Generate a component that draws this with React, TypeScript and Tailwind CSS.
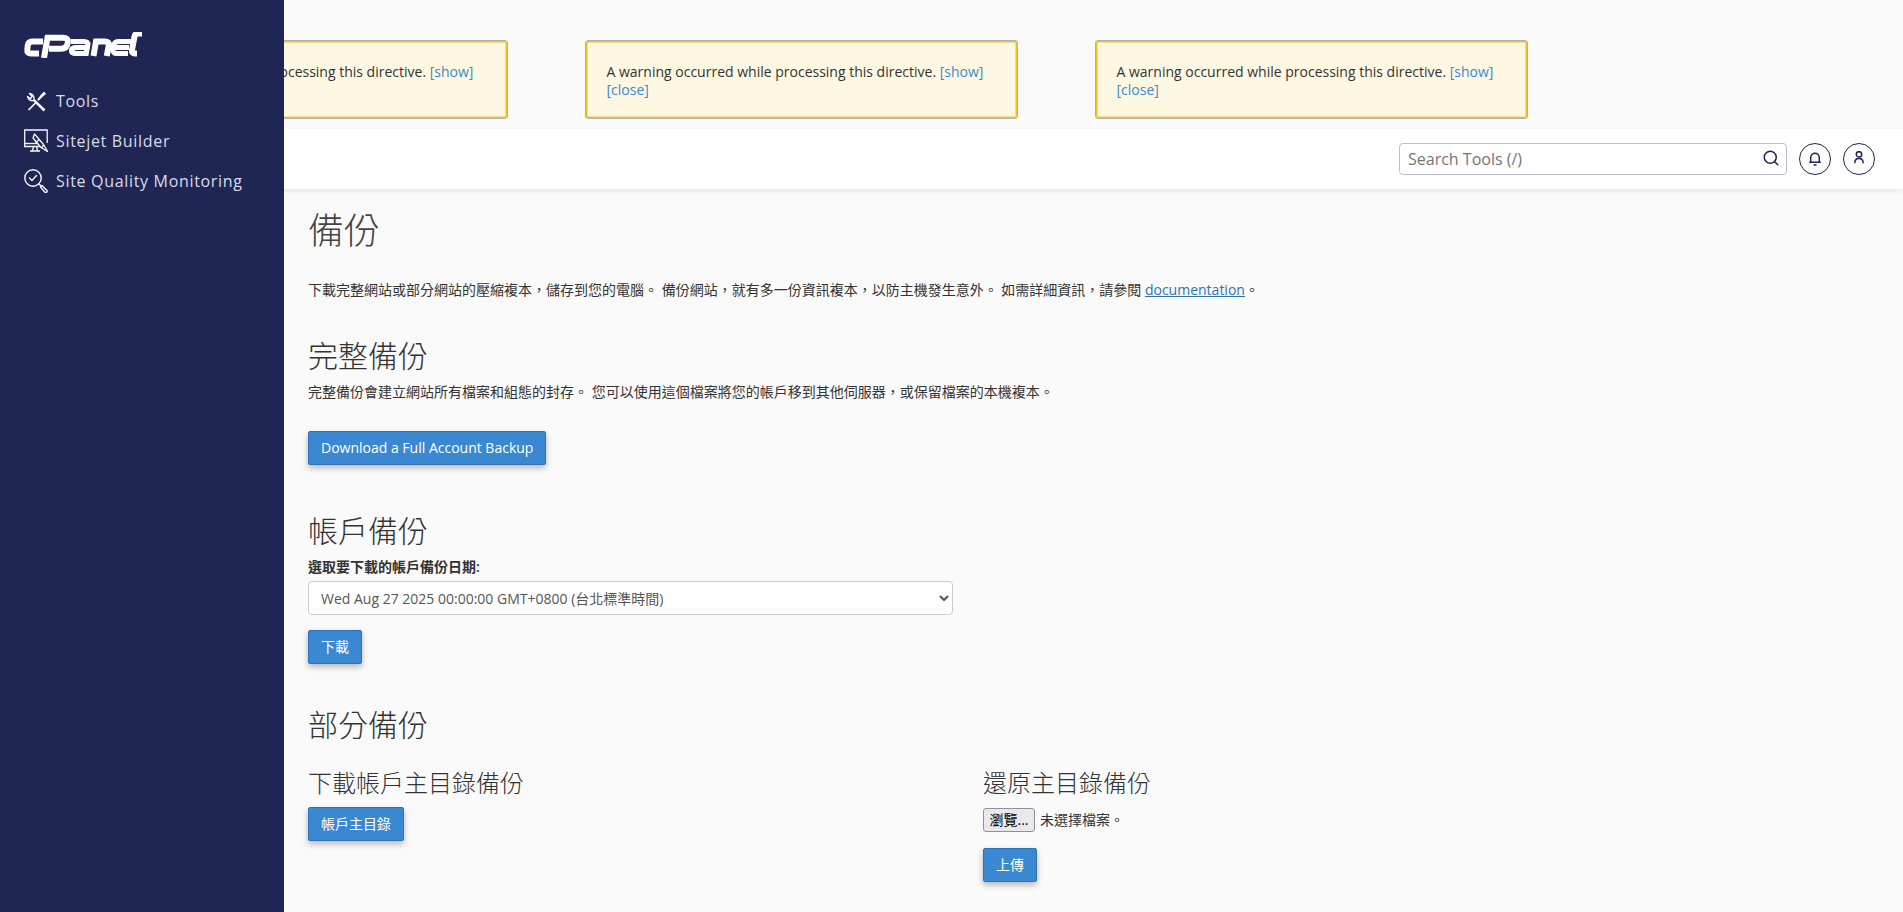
import { Search } from 'lucide-react';

const font = "font-['Open_Sans','Noto_Sans_CJK_TC',sans-serif]";

const btn =
    'h-[34px] rounded-[2px] border border-[#2f73b5] bg-[#3a88d2] px-3 text-sm text-white shadow-[0_3px_6px_rgba(0,0,0,0.28)]';

function Logo() {
    return (
        <svg width="118" height="26" viewBox="0 0 118 26" fill="none" stroke="white" strokeWidth="6" className="block">
            <path d="M19 9.5H9Q4.5 9.5 3.8 13L3.3 18Q3 21.5 7 21.5H15" />
            <path d="M20 26L23.5 5.8H39Q44.5 5.8 43.8 10.5Q43 16.8 37 16.8H25" />
            <path d="M47 9.5H60Q64.5 9.5 63.8 13L62.2 21.5H52Q47 21.5 47.5 18Q48 15.5 52 15.5H63" strokeWidth="5.2" />
            <path d="M69.5 24L72 9.5H81Q85.5 9.5 84.8 13L82.8 24" />
            <path d="M105 15.5H91M107 9.5H95Q90.5 9.5 89.8 13L89 18Q88.7 21.5 93 21.5H104" strokeWidth="5.2" />
            <path d="M118 1.5H114Q111 1.5 110.5 4.5L108 18Q107.5 21.5 110.5 21.5H113" />
        </svg>
    );
}

function ToolsIcon() {
    return (
        <svg width="24" height="24" viewBox="0 0 24 24" fill="none" stroke="#f6f7fb" strokeWidth="1.7">
            <path d="M4.5 21L12.5 13" />
            <path d="M14 10.5L17 6.5L20 3.5L21.2 4.7L18 7.5L14.5 11Z" fill="#f6f7fb" strokeWidth="1.2" strokeLinejoin="round" />
            <path d="M20.5 20.5L10 10.5C10.5 8 9 5 5.5 4.5L8 7.5L6.5 9.5L3.5 7.5C4 10.5 7 12 9.5 11.5L19.5 21.5Z" strokeLinejoin="round" strokeWidth="1.4" />
        </svg>
    );
}

function SitejetIcon() {
    return (
        <svg width="24" height="24" viewBox="0 0 24 24" fill="none" stroke="#f6f7fb" strokeWidth="1.3">
            <path d="M17 17.5H0.7V1H23.2V14" />
            <path d="M0.7 14.5H15" />
            <path d="M9.5 17.5L8.5 21.5M12.5 17.5L13.5 21.5M6 22H16" />
            <path d="M10.5 5L19.5 15.5L23.5 22.5L17 18.5L9 9Z" strokeLinejoin="round" fill="#1f2654" />
            <path d="M15 10.5L11.5 14M17.5 19L20 15.5" />
        </svg>
    );
}

function QualityIcon() {
    return (
        <svg width="24" height="24" viewBox="0 0 24 24" fill="none" stroke="#f6f7fb" strokeWidth="1.4">
            <circle cx="9" cy="9" r="8.2" />
            <path d="M5.5 9L8 11.5L12.5 6.5" strokeLinecap="round" />
            <path d="M15 15L17 17" />
            <path d="M16.5 18L18 16.5L23 21.5Q23.5 23 22.2 23.5Q21 23.7 20.5 22.8Z" strokeLinejoin="round" />
        </svg>
    );
}

const navItems = [
    { label: 'Tools', icon: ToolsIcon },
    { label: 'Sitejet Builder', icon: SitejetIcon },
    { label: 'Site Quality Monitoring', icon: QualityIcon },
];

function Sidebar() {
    return (
        <aside className="absolute inset-y-0 left-0 z-10 w-[284px] bg-[#1f2654] pl-6 pt-8">
            <Logo />
            <nav className="mt-[23px] flex flex-col">
                {navItems.map((item) => (
                    <a key={item.label} className="flex h-10 items-center gap-2 text-base tracking-[0.68px] text-[#d9dce8]">
                        <item.icon />
                        {item.label}
                    </a>
                ))}
            </nav>
        </aside>
    );
}

function Warning() {
    return (
        <div className="h-[79px] w-[433.5px] shrink-0 rounded-[3px] border border-[#b0b0b0] bg-[#fef8e3] px-[21px] py-[22px] text-sm leading-[18px] text-[#333] shadow-[inset_0_0_0_1.5px_#f3c21c]">
            A warning occurred while processing this directive. <a className="text-[#3a88d2]">[show]</a>{' '}
            <a className="text-[#3a88d2]">[close]</a>
        </div>
    );
}

function Header() {
    return (
        <header className="flex h-[60px] items-center justify-end gap-3 bg-white pr-7 shadow-[0_2px_5px_rgba(0,0,0,0.08)]">
            <div className="flex h-8 w-[388px] items-center justify-between rounded-[4px] border border-[#bcbccc] pl-2 pr-[6px] text-base text-[#757575]">
                Search Tools (/)
                <Search size={18} strokeWidth={2} className="mb-[2px] text-[#1f2654]" />
            </div>
            <div className="flex h-8 w-8 items-center justify-center rounded-full border border-[#1f2654] text-[#1f2654]">
                <svg width="16" height="16" viewBox="0 0 16 16" fill="none" stroke="currentColor" strokeWidth="1.5">
                    <path d="M3.7 11V6.5a4.3 4.3 0 0 1 8.6 0V11" />
                    <path d="M2.2 11.3h11.6M6.5 14h3" />
                </svg>
            </div>
            <div className="flex h-8 w-8 items-center justify-center rounded-full border border-[#1f2654] text-[#1f2654]">
                <svg width="16" height="16" viewBox="0 0 16 16" fill="none" stroke="currentColor" strokeWidth="1.5">
                    <circle cx="8" cy="3.4" r="2.7" />
                    <path d="M3.8 12.2C3.8 9 5.8 7.5 8 7.5C10.2 7.5 12.2 9 12.2 12.2" />
                </svg>
            </div>
        </header>
    );
}

export default function App() {
    return (
        <div lang="zh-TW" className={`relative h-[912px] overflow-hidden bg-[#fafafa] text-[#333] ${font}`}>
            <Sidebar />
            <div className="flex h-[129px] gap-[76.5px] pl-[74.5px] pt-[40px]">
                <Warning />
                <Warning />
                <Warning />
            </div>
            <Header />
            <main className="pl-[308px] pr-7">
                <h1 className="mt-[20px] text-4xl leading-[44px] font-light text-[#444]">備份</h1>
                <p className="mt-[27px] text-sm leading-5">
                    下載完整網站或部分網站的壓縮複本，儲存到您的電腦。 備份網站，就有多一份資訊複本，以防主機發生意外。 如需詳細資訊，請參閱{' '}
                    <a className="text-[#2f73b5] underline">documentation</a>。
                </p>

                <h2 className="mt-[38px] text-[30px] leading-[36px] font-light">完整備份</h2>
                <p className="mt-[8px] text-sm leading-5">
                    完整備份會建立網站所有檔案和組態的封存。 您可以使用這個檔案將您的帳戶移到其他伺服器，或保留檔案的本機複本。
                </p>
                <button className={`mt-[29px] block ${btn}`}>Download a Full Account Backup</button>

                <h2 className="mt-[48px] text-[30px] leading-[36px] font-light">帳戶備份</h2>
                <label className="mt-[8px] block text-sm leading-5 font-semibold">選取要下載的帳戶備份日期:</label>
                <select className="mt-[4px] block h-[34px] w-[645px] rounded-[4px] border border-[#ccc] bg-white pl-2 text-sm text-[#555]">
                    <option>Wed Aug 27 2025 00:00:00 GMT+0800 (台北標準時間)</option>
                </select>
                <button className={`mt-[15px] block ${btn}`}>下載</button>

                <h2 className="mt-[43px] text-[30px] leading-[36px] font-light">部分備份</h2>
                <div className="mt-[25px] grid grid-cols-[675px_1fr]">
                    <div>
                        <h3 className="text-2xl leading-[30px] font-light">下載帳戶主目錄備份</h3>
                        <button className={`mt-[9px] block ${btn}`}>帳戶主目錄</button>
                    </div>
                    <div>
                        <h3 className="text-2xl leading-[30px] font-light">還原主目錄備份</h3>
                        <div className="mt-[10px] flex items-center gap-[5px] text-sm">
                            <button className="h-6 w-[52px] rounded-[3px] border border-[#8f8f9d] bg-[#e9e9ed] text-sm text-black">瀏覽...</button>
                            未選擇檔案。
                        </div>
                        <button className={`mt-[16px] block ${btn}`}>上傳</button>
                    </div>
                </div>
            </main>
        </div>
    );
}
